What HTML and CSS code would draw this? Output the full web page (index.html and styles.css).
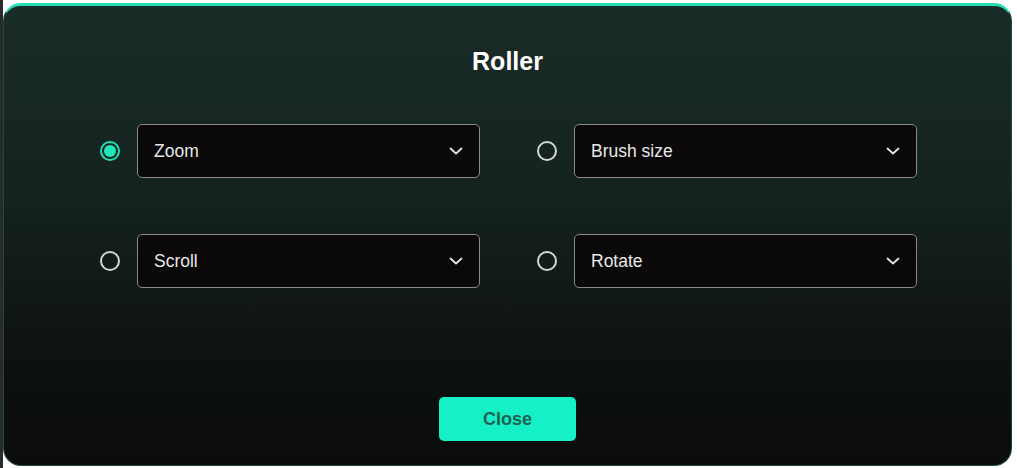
FILE: index.html
```html
<!DOCTYPE html>
<html>
<head>
<meta charset="utf-8">
<link rel="stylesheet" href="styles.css">
</head>
<body>
<div class="panel">
  <h1 class="title">Roller</h1>
  <div class="grid">
    <div class="option">
      <span class="radio checked"></span>
      <div class="select"><span>Zoom</span><svg class="chev" width="14" height="8" viewBox="0 0 14 8"><path d="M1.5 1.5 L7 6.5 L12.5 1.5" fill="none" stroke="#e6e6e6" stroke-width="1.8" stroke-linecap="round" stroke-linejoin="round"/></svg></div>
    </div>
    <div class="option">
      <span class="radio"></span>
      <div class="select"><span>Brush size</span><svg class="chev" width="14" height="8" viewBox="0 0 14 8"><path d="M1.5 1.5 L7 6.5 L12.5 1.5" fill="none" stroke="#e6e6e6" stroke-width="1.8" stroke-linecap="round" stroke-linejoin="round"/></svg></div>
    </div>
    <div class="option">
      <span class="radio"></span>
      <div class="select"><span>Scroll</span><svg class="chev" width="14" height="8" viewBox="0 0 14 8"><path d="M1.5 1.5 L7 6.5 L12.5 1.5" fill="none" stroke="#e6e6e6" stroke-width="1.8" stroke-linecap="round" stroke-linejoin="round"/></svg></div>
    </div>
    <div class="option">
      <span class="radio"></span>
      <div class="select"><span>Rotate</span><svg class="chev" width="14" height="8" viewBox="0 0 14 8"><path d="M1.5 1.5 L7 6.5 L12.5 1.5" fill="none" stroke="#e6e6e6" stroke-width="1.8" stroke-linecap="round" stroke-linejoin="round"/></svg></div>
    </div>
  </div>
  <div class="footer">
    <button class="close">Close</button>
  </div>
</div>
</body>
</html>
```
FILE: styles.css
```css
html, body {
  margin: 0;
  padding: 0;
  background: #ffffff;
}
body {
  width: 1017px;
  height: 468px;
  padding: 3px 5px 2px 3px;
  box-sizing: border-box;
  font-family: "Liberation Sans", Arial, sans-serif;
  background: linear-gradient(to right, #2a2a2a 0, #2a2a2a 3px, #ffffff 3px);
}
.panel {
  height: 463px;
  box-sizing: border-box;
  border-radius: 18px;
  border: 1px solid #1d4a40;
  border-top: 3px solid #22e0b4;
  background: linear-gradient(to bottom, #1a2c27 0%, #15231f 40%, #0d1010 80%, #0b0c0c 100%);
  padding: 0 96px;
  display: flex;
  flex-direction: column;
}
.title {
  margin: 40px 0 0;
  text-align: center;
  color: #ffffff;
  font-size: 25px;
  font-weight: bold;
  line-height: 30px;
}
.grid {
  margin-top: 48px;
  display: grid;
  grid-template-columns: 380px 380px;
  column-gap: 57px;
  row-gap: 56px;
}
.option {
  display: flex;
  align-items: center;
  gap: 17px;
}
.radio {
  width: 16px;
  height: 16px;
  border-radius: 50%;
  border: 2px solid #d6d6d6;
  box-sizing: content-box;
  flex: none;
  position: relative;
}
.radio.checked {
  border-color: #1ee0b4;
}
.radio.checked::after {
  content: "";
  position: absolute;
  left: 2px;
  top: 2px;
  width: 12px;
  height: 12px;
  border-radius: 50%;
  background: #1ee8bc;
}
.select {
  flex: 1;
  height: 54px;
  box-sizing: border-box;
  border: 1px solid #8a8a8a;
  border-radius: 5px;
  background: #0a0808;
  display: flex;
  align-items: center;
  justify-content: space-between;
  padding: 0 16px 0 16px;
  color: #e8e8e8;
  font-size: 17.5px;
}
.chev {
  display: block;
}
.footer {
  margin-top: auto;
  margin-bottom: 24px;
  display: flex;
  justify-content: center;
}
.close {
  width: 137px;
  height: 44px;
  border: none;
  border-radius: 5px;
  background: #16f0c6;
  color: #1b6352;
  font-family: "Liberation Sans", Arial, sans-serif;
  font-size: 18px;
  font-weight: bold;
  cursor: pointer;
  padding: 0;
}
```
